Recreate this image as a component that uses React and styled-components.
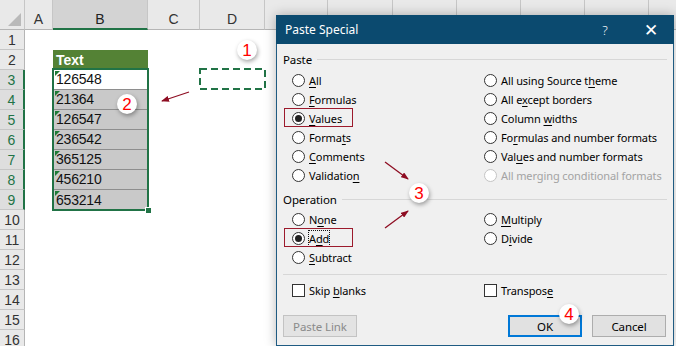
import React from "react";
import styled, { createGlobalStyle, css } from "styled-components";

const Global = createGlobalStyle`
  html, body { margin: 0; padding: 0; background: #fff; overflow: hidden; }
  #root { width: 676px; height: 346px; position: relative; overflow: hidden; }
`;

const Stage = styled.div`
  position: relative;
  width: 676px;
  height: 346px;
  overflow: hidden;
  background: #fff;
`;

/* ---------------- spreadsheet ---------------- */
const Sheet = styled.div`
  display: grid;
  grid-template-columns: 25px 28px 95px 52px 65px 63px 65px repeat(5, 64px);
  grid-template-rows: 30px repeat(16, 20px);
  font-family: "Liberation Sans", Arial, sans-serif;
  font-size: 14px;
  color: #222;
`;

const Corner = styled.div`
  position: relative;
  background: #e9e9e9;
  border-right: 1px solid #c6c6c6;
  border-bottom: 1px solid #b5b5b5;
  box-sizing: border-box;
  &::after {
    content: "";
    position: absolute;
    right: 3px;
    bottom: 3px;
    width: 0;
    height: 0;
    border-left: 13px solid transparent;
    border-bottom: 13px solid #b9b9b9;
  }
`;

const ColHead = styled.div`
  box-sizing: border-box;
  display: flex;
  justify-content: center;
  padding-top: 9px;
  line-height: 20px;
  background: ${(p) => (p.$active ? "#d3d3d3" : "#e9e9e9")};
  border-right: 1px solid #c6c6c6;
  border-bottom: ${(p) => (p.$active ? "2px solid #217346" : "1px solid #b5b5b5")};
  color: ${(p) => (p.$active ? "#222" : "#333")};
`;

const RowHead = styled.div`
  box-sizing: border-box;
  display: flex;
  align-items: center;
  justify-content: center;
  background: ${(p) => (p.$active ? "#dedede" : "#e9e9e9")};
  border-bottom: 1px solid #c6c6c6;
  border-right: ${(p) => (p.$active ? "2px solid #217346" : "1px solid #b5b5b5")};
  color: ${(p) => (p.$active ? "#217346" : "#333")};
  font-size: 14px;
`;

const Cell = styled.div`
  box-sizing: border-box;
  position: relative;
  display: flex;
  align-items: flex-end;
  padding: 0 0 1px 3px;
  font-size: 14px;
  line-height: 18px;
  white-space: nowrap;
  ${(p) =>
    p.$kind === "title" &&
    css`
      background: #548235;
      color: #fff;
      font-weight: bold;
    `}
  ${(p) =>
    p.$kind === "value" &&
    css`
      background: ${p.$first ? "#fff" : "#c9c9c9"};
      border-bottom: ${p.$last ? "none" : "1px solid #8e8e8e"};
      color: #111;
      letter-spacing: -0.2px;
      &::before {
        content: "";
        position: absolute;
        left: 2px;
        top: 1px;
        border-top: 5px solid #1d7a36;
        border-right: 5px solid transparent;
      }
    `}
`;

const Selection = styled.div`
  position: absolute;
  left: 52px;
  top: 68px;
  width: 97px;
  height: 143px;
  box-sizing: border-box;
  border: 2px solid #217346;
  pointer-events: none;
  &::after {
    content: "";
    position: absolute;
    right: -5px;
    bottom: -5px;
    width: 5px;
    height: 5px;
    background: #217346;
    border: 1px solid #fff;
  }
`;

const Marquee = styled.svg`
  position: absolute;
  left: 199px;
  top: 68px;
`;

/* ---------------- dialog ---------------- */
const Dialog = styled.div`
  position: absolute;
  left: 276px;
  top: 15px;
  width: 398px;
  height: 331px;
  box-sizing: border-box;
  border: 1px solid #1f5b82;
  background: #f0f0f0;
  box-shadow: 0 0 11px rgba(0, 0, 0, 0.28);
  font-family: "Noto Sans", "Open Sans", sans-serif;
  font-size: 11px;
  letter-spacing: -0.1px;
  color: #000;
  display: flex;
  flex-direction: column;
`;

const TitleBar = styled.div`
  height: 29px;
  flex: none;
  display: flex;
  align-items: center;
  background: #0b4a6f;
  color: #fff;
  margin: -1px -1px 0 -1px;
`;

const Title = styled.div`
  flex: 1;
  padding-left: 9px;
  font-size: 12px;
  letter-spacing: 0;
`;

const TitleButton = styled.div`
  width: 46px;
  height: 29px;
  display: flex;
  align-items: center;
  justify-content: center;
  font-size: ${(p) => (p.$big ? "17px" : "13px")};
  font-weight: 300;
`;

const Body = styled.div`
  flex: 1;
  display: flex;
  flex-direction: column;
  padding: 0 6px 0 6px;
`;

const GroupHead = styled.div`
  display: flex;
  align-items: center;
  height: 16px;
  font-size: 11.5px;
  margin-top: ${(p) => p.$mt}px;
  &::after {
    content: "";
    flex: 1;
    height: 0;
    border-top: 1px solid #d7d7d7;
    margin-left: 5px;
  }
`;

const Options = styled.div`
  display: grid;
  grid-template-columns: 192px 1fr;
  grid-auto-rows: 19px;
  padding-left: 9px;
  margin-top: ${(p) => p.$mt}px;
`;

const Option = styled.div`
  position: relative;
  display: flex;
  align-items: center;
  gap: 4px;
  color: ${(p) => (p.$disabled ? "#a3a3a3" : "#000")};
  ${(p) =>
    p.$marked &&
    css`
      &::after {
        content: "";
        position: absolute;
        left: -8px;
        top: -1px;
        width: 69px;
        height: 19px;
        box-sizing: border-box;
        border: 1.5px solid #9c1a2c;
      }
    `}
`;

const Radio = styled.span`
  width: 13px;
  height: 13px;
  box-sizing: border-box;
  border-radius: 50%;
  border: 1px solid ${(p) => (p.$disabled ? "#c4c4c4" : "#333")};
  background: #fff;
  display: flex;
  align-items: center;
  justify-content: center;
  flex: none;
  &::after {
    content: "";
    width: 7px;
    height: 7px;
    border-radius: 50%;
    background: ${(p) => (p.$checked ? "#222" : "transparent")};
  }
`;

const Check = styled.span`
  width: 13px;
  height: 13px;
  box-sizing: border-box;
  border: 1px solid #333;
  background: #fff;
  flex: none;
`;

const Label = styled.span`
  white-space: nowrap;
  line-height: 15px;
  ${(p) =>
    p.$focus &&
    css`
      outline: 1px dotted #111;
      outline-offset: 0px;
    `}
`;

const Key = styled.span`
  text-decoration: underline;
  text-underline-offset: 2px;
`;

const Rule = styled.div`
  border-top: 1px solid #d7d7d7;
  margin-top: 7px;
  height: 0;
`;

const Checks = styled.div`
  display: grid;
  grid-template-columns: 192px 1fr;
  height: 19px;
  padding-left: 9px;
  margin-top: 6px;
`;

const Buttons = styled.div`
  display: flex;
  align-items: center;
  margin-top: 15px;
  padding-right: 1px;
`;

const Button = styled.div`
  width: 74px;
  height: 22px;
  box-sizing: border-box;
  display: flex;
  align-items: center;
  justify-content: center;
  font-size: 11.5px;
  background: ${(p) => (p.$disabled ? "#e3e3e3" : "#e1e1e1")};
  border: ${(p) =>
    p.$primary ? "2px solid #0078d7" : p.$disabled ? "1px solid #c3c3c3" : "1px solid #adadad"};
  color: ${(p) => (p.$disabled ? "#8a8a8a" : "#000")};
  margin-left: ${(p) => (p.$push ? "auto" : p.$gap ? "10px" : "0")};
`;

/* ---------------- callouts ---------------- */
const Badge = styled.div`
  position: absolute;
  width: 20px;
  height: 20px;
  border-radius: 50%;
  background: #fff;
  box-shadow: 1px 2px 4px rgba(0, 0, 0, 0.35);
  color: #f00;
  font-family: "Liberation Sans", Arial, sans-serif;
  font-size: 17px;
  display: flex;
  align-items: center;
  justify-content: center;
  line-height: 1;
`;

const Arrows = styled.svg`
  position: absolute;
  left: 0;
  top: 0;
  pointer-events: none;
`;

function Text({ t, k }) {
  if (k === undefined || k < 0) return <>{t}</>;
  return (
    <>
      {t.slice(0, k)}
      <Key>{t[k]}</Key>
      {t.slice(k + 1)}
    </>
  );
}

const cols = ["A", "B", "C", "D", "", "", "", "", "", "", ""];
const values = ["126548", "21364", "126547", "236542", "365125", "456210", "653214"];

const pasteOpts = [
  [{ t: "All", k: 0 }, { t: "All using Source theme", k: 18 }],
  [{ t: "Formulas", k: 0 }, { t: "All except borders", k: 5 }],
  [{ t: "Values", k: 0, checked: true, marked: true }, { t: "Column widths", k: 7 }],
  [{ t: "Formats", k: 5 }, { t: "Formulas and number formats", k: 2 }],
  [{ t: "Comments", k: 0 }, { t: "Values and number formats", k: 3 }],
  [{ t: "Validation", k: 9 }, { t: "All merging conditional formats", disabled: true }],
];

const opOpts = [
  [{ t: "None", k: 1 }, { t: "Multiply", k: 0 }],
  [{ t: "Add", k: 1, checked: true, marked: true, focus: true }, { t: "Divide", k: 1 }],
  [{ t: "Subtract", k: 0 }, null],
];

function RadioOption({ o }) {
  if (!o) return <div />;
  return (
    <Option $disabled={o.disabled} $marked={o.marked}>
      <Radio $checked={o.checked} $disabled={o.disabled} />
      <Label $focus={o.focus}>
        <Text t={o.t} k={o.k} />
      </Label>
    </Option>
  );
}

export default function App() {
  const rows = [];
  for (let r = 1; r <= 16; r++) {
    const active = r >= 3 && r <= 9;
    rows.push(
      <RowHead key={`h${r}`} $active={active}>
        {r}
      </RowHead>
    );
    cols.forEach((c, ci) => {
      let content = null;
      let kind;
      if (c === "B" && r === 2) {
        kind = "title";
        content = "Text";
      } else if (c === "B" && active) {
        kind = "value";
        content = values[r - 3];
      }
      rows.push(
        <Cell key={`${ci}-${r}`} $kind={kind} $first={r === 3} $last={r === 9}>
          {content}
        </Cell>
      );
    });
  }

  return (
    <Stage>
      <Global />
      <Sheet>
        <Corner />
        {cols.map((c, ci) => (
          <ColHead key={ci} $active={c === "B"}>
            {c}
          </ColHead>
        ))}
        {rows}
      </Sheet>
      <Selection />
      <Marquee width="67" height="22" viewBox="0 0 67 22">
        <rect x="1" y="1" width="65" height="20" fill="none" stroke="#217346" strokeWidth="2" strokeDasharray="7 4" />
      </Marquee>

      <Dialog>
        <TitleBar>
          <Title>Paste Special</Title>
          <TitleButton>?</TitleButton>
          <TitleButton $big>✕</TitleButton>
        </TitleBar>
        <Body>
          <GroupHead $mt={7}>Paste</GroupHead>
          <Options $mt={4}>
            {pasteOpts.map((row, i) =>
              row.map((o, j) => <RadioOption key={`${i}-${j}`} o={o} />)
            )}
          </Options>
          <GroupHead $mt={6}>Operation</GroupHead>
          <Options $mt={3}>
            {opOpts.map((row, i) =>
              row.map((o, j) => <RadioOption key={`${i}-${j}`} o={o} />)
            )}
          </Options>
          <Rule />
          <Checks>
            <Option>
              <Check />
              <Label>
                <Text t="Skip blanks" k={5} />
              </Label>
            </Option>
            <Option>
              <Check />
              <Label>
                <Text t="Transpose" k={8} />
              </Label>
            </Option>
          </Checks>
          <Buttons>
            <Button $disabled>Paste Link</Button>
            <Button $primary $push>
              OK
            </Button>
            <Button $gap>Cancel</Button>
          </Buttons>
        </Body>
      </Dialog>

      <Arrows width="676" height="346" viewBox="0 0 676 346">
        <defs>
          <marker id="ah" markerWidth="8" markerHeight="6" refX="7" refY="3" orient="auto" markerUnits="userSpaceOnUse">
            <path d="M0,0 L8,3 L0,6 Z" fill="#8e0d22" />
          </marker>
        </defs>
        <line x1="189" y1="92" x2="162" y2="101" stroke="#8e0d22" strokeWidth="1.3" markerEnd="url(#ah)" />
        <line x1="385" y1="162" x2="408" y2="179" stroke="#8e0d22" strokeWidth="1.3" markerEnd="url(#ah)" />
        <line x1="385" y1="228" x2="408" y2="211" stroke="#8e0d22" strokeWidth="1.3" markerEnd="url(#ah)" />
      </Arrows>

      <Badge style={{ left: 237, top: 40 }}>1</Badge>
      <Badge style={{ left: 117, top: 94 }}>2</Badge>
      <Badge style={{ left: 409, top: 183 }}>3</Badge>
      <Badge style={{ left: 559, top: 304 }}>4</Badge>
    </Stage>
  );
}
